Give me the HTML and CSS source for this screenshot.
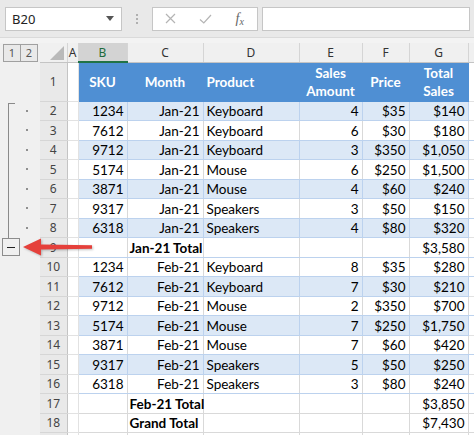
FILE: index.html
```html
<!DOCTYPE html>
<html lang="en">
<head>
  <meta charset="UTF-8">
  <title>Subtotals</title>
  <link rel="stylesheet" href="styles.css">
</head>
<body>

  <!-- Name box + formula bar -->
  <div class="formula-bar">
    <div class="name-box">
      <span>B20</span>
      <svg width="8" height="5" viewBox="0 0 8 5"><path d="M0 0h8L4 5z" fill="#555"/></svg>
    </div>
    <div class="grip"><i></i><i></i><i></i></div>
    <div class="fx-buttons">
      <span><svg width="11" height="11" viewBox="0 0 11 11"><path d="M1 1l9 9M10 1l-9 9" stroke="#b4b4b4" stroke-width="1.2"/></svg></span>
      <span><svg width="13" height="10" viewBox="0 0 13 10"><path d="M1 5.5l3.8 3.5L12 1" fill="none" stroke="#b4b4b4" stroke-width="1.2"/></svg></span>
      <span class="fx"><i>f</i><small>x</small></span>
    </div>
    <div class="formula-input"></div>
  </div>

  <div class="sheet">
    <table class="grid">
      <colgroup>
        <col style="width:40px"><col style="width:27px"><col style="width:11px">
        <col style="width:49px"><col style="width:76px"><col style="width:96px">
        <col style="width:63px"><col style="width:47px"><col style="width:59px"><col style="width:20px">
      </colgroup>

      <tr class="col-heads">
        <td class="gutter"><span class="level">1</span><span class="level">2</span></td>
        <td class="corner"><svg width="14" height="14" viewBox="0 0 14 14"><path d="M14 0v14H0z" fill="#b9b9b9"/></svg></td>
        <td>A</td><td class="sel">B</td><td>C</td><td>D</td><td>E</td><td>F</td><td>G</td><td></td>
      </tr>

      <tr class="head">
        <td class="gutter"></td><td class="rh">1</td><td class="a"></td>
        <td class="c">SKU</td><td class="c">Month</td><td class="l">Product</td>
        <td class="c">Sales<br>Amount</td><td class="c">Price</td><td class="c">Total<br>Sales</td><td class="h"></td>
      </tr>

      <tr class="band"><td class="gutter grp first"><i class="dot"></i></td><td class="rh">2</td><td class="a"></td>
        <td>1234</td><td>Jan-21</td><td class="l">Keyboard</td><td>4</td><td>$35</td><td>$140</td><td class="h"></td></tr>
      <tr class="plain"><td class="gutter grp"><i class="dot"></i></td><td class="rh">3</td><td class="a"></td>
        <td>7612</td><td>Jan-21</td><td class="l">Keyboard</td><td>6</td><td>$30</td><td>$180</td><td class="h"></td></tr>
      <tr class="band"><td class="gutter grp"><i class="dot"></i></td><td class="rh">4</td><td class="a"></td>
        <td>9712</td><td>Jan-21</td><td class="l">Keyboard</td><td>3</td><td>$350</td><td>$1,050</td><td class="h"></td></tr>
      <tr class="plain"><td class="gutter grp"><i class="dot"></i></td><td class="rh">5</td><td class="a"></td>
        <td>5174</td><td>Jan-21</td><td class="l">Mouse</td><td>6</td><td>$250</td><td>$1,500</td><td class="h"></td></tr>
      <tr class="band"><td class="gutter grp"><i class="dot"></i></td><td class="rh">6</td><td class="a"></td>
        <td>3871</td><td>Jan-21</td><td class="l">Mouse</td><td>4</td><td>$60</td><td>$240</td><td class="h"></td></tr>
      <tr class="plain"><td class="gutter grp"><i class="dot"></i></td><td class="rh">7</td><td class="a"></td>
        <td>9317</td><td>Jan-21</td><td class="l">Speakers</td><td>3</td><td>$50</td><td>$150</td><td class="h"></td></tr>
      <tr class="band"><td class="gutter grp"><i class="dot"></i></td><td class="rh">8</td><td class="a"></td>
        <td>6318</td><td>Jan-21</td><td class="l">Speakers</td><td>4</td><td>$80</td><td>$320</td><td class="h"></td></tr>
      <tr class="plain"><td class="gutter"><span class="toggle"><i></i></span></td><td class="rh">9</td><td class="a"></td>
        <td></td><td class="l b">Jan-21 Total</td><td></td><td></td><td></td><td>$3,580</td><td class="h"></td></tr>

      <tr class="plain"><td class="gutter"></td><td class="rh">10</td><td class="a"></td>
        <td>1234</td><td>Feb-21</td><td class="l">Keyboard</td><td>8</td><td>$35</td><td>$280</td><td class="h"></td></tr>
      <tr class="band"><td class="gutter"></td><td class="rh">11</td><td class="a"></td>
        <td>7612</td><td>Feb-21</td><td class="l">Keyboard</td><td>7</td><td>$30</td><td>$210</td><td class="h"></td></tr>
      <tr class="plain"><td class="gutter"></td><td class="rh">12</td><td class="a"></td>
        <td>9712</td><td>Feb-21</td><td class="l">Mouse</td><td>2</td><td>$350</td><td>$700</td><td class="h"></td></tr>
      <tr class="band"><td class="gutter"></td><td class="rh">13</td><td class="a"></td>
        <td>5174</td><td>Feb-21</td><td class="l">Mouse</td><td>7</td><td>$250</td><td>$1,750</td><td class="h"></td></tr>
      <tr class="plain"><td class="gutter"></td><td class="rh">14</td><td class="a"></td>
        <td>3871</td><td>Feb-21</td><td class="l">Mouse</td><td>7</td><td>$60</td><td>$420</td><td class="h"></td></tr>
      <tr class="band"><td class="gutter"></td><td class="rh">15</td><td class="a"></td>
        <td>9317</td><td>Feb-21</td><td class="l">Speakers</td><td>5</td><td>$50</td><td>$250</td><td class="h"></td></tr>
      <tr class="plain"><td class="gutter"></td><td class="rh">16</td><td class="a"></td>
        <td>6318</td><td>Feb-21</td><td class="l">Speakers</td><td>3</td><td>$80</td><td>$240</td><td class="h"></td></tr>
      <tr class="plain total"><td class="gutter"></td><td class="rh">17</td><td class="a"></td>
        <td></td><td class="l b">Feb-21 Total</td><td></td><td></td><td></td><td>$3,850</td><td class="h"></td></tr>
      <tr class="plain total"><td class="gutter"></td><td class="rh">18</td><td class="a"></td>
        <td></td><td class="l b">Grand Total</td><td></td><td></td><td></td><td>$7,430</td><td class="h"></td></tr>
      <tr class="plain total"><td class="gutter"></td><td class="rh"></td><td class="a"></td>
        <td></td><td></td><td></td><td></td><td></td><td></td><td class="h"></td></tr>
    </table>

    <!-- callout arrow pointing at the collapse button -->
    <svg class="arrow" width="76" height="24" viewBox="0 0 76 24">
      <path d="M3 12L21 3.5V9.5L72 10.2V13.8L21 14.5V20.5Z" fill="#e5403b"/>
    </svg>
  </div>

</body>
</html>
```

FILE: styles.css
```css
body {
  margin: 0;
  width: 474px;
  height: 435px;
  overflow: hidden;
  background: #f3f3f3;
  font-family: 'Lato', sans-serif;
}

/* Formula Bar */
.formula-bar {
  display: flex;
  align-items: center;
  height: 37px;
  padding-left: 5px;
  background: #e9e9e9;
  border-bottom: 1px solid #dadada;
  margin-bottom: 5px;
}

.name-box {
  width: 117px;
  height: 24px;
  box-sizing: border-box;
  border: 1px solid #c6c6c6;
  background: #fff;
  display: flex;
  align-items: center;
  justify-content: space-between;
  padding: 0 7px 0 6px;
  font: 13px 'Noto Sans', sans-serif;
  color: #222;
}

.grip {
  width: 30px;
  display: flex;
  flex-direction: column;
  align-items: center;
  gap: 2px;
}

.grip i {
  width: 2px;
  height: 2px;
  background: #b0b0b0;
}

.fx-buttons {
  width: 106px;
  height: 24px;
  box-sizing: border-box;
  border: 1px solid #c6c6c6;
  background: #fff;
  display: flex;
}

.fx-buttons span {
  width: 35px;
  display: flex;
  align-items: center;
  justify-content: center;
}

.fx {
  font-family: 'Liberation Serif', serif;
  color: #666;
  font-size: 14px;
}

.fx small {
  font-style: italic;
  font-size: 10px;
  margin-top: 5px;
}

.formula-input {
  flex: 1;
  height: 24px;
  box-sizing: border-box;
  margin: 0 4px;
  border: 1px solid #c6c6c6;
  background: #fff;
}

/* Sheet */
.sheet {
  position: relative;
  background: #fff;
}

.grid {
  border-collapse: collapse;
  table-layout: fixed;
  width: 468px;
}

.grid td {
  padding: 1px 3px 0;
  height: 19.5px;
  box-sizing: border-box;
  border: 1px solid #d9d9d9;
  font-size: 13.5px;
  color: #000;
  text-align: right;
  white-space: nowrap;
  overflow: hidden;
}

.grid td.l { text-align: left; }
.grid td.c { text-align: center; }
.grid td.b { font-weight: bold; overflow: visible; padding-left: 2px; }

/* column letters */
.col-heads td {
  height: 19px;
  background: #f0f0f0;
  border: none;
  border-right: 1px solid #d5d5d5;
  border-bottom: 1px solid #c4c4c4;
  text-align: center;
  font: 12px 'Noto Sans', sans-serif;
  color: #333;
  padding: 0;
}

.col-heads td.sel {
  background: #d3d3d3;
  color: #1e6b3c;
  border-bottom: 2px solid #217346;
}

.col-heads td.corner {
  text-align: right;
  vertical-align: bottom;
  padding: 0 3px 2px 0;
}

.col-heads td.corner svg { display: block; margin-left: auto; }

/* outline gutter */
.grid td.gutter {
  background: #f0f0f0;
  border: none;
  text-align: left;
  padding: 0;
}

.col-heads td.gutter {
  border-right: none;
  border-bottom: none;
  padding-left: 3px;
}

.level {
  display: inline-block;
  width: 16px;
  height: 16px;
  line-height: 16px;
  border: 1px solid #a0a0a0;
  background: #e9e9e9;
  font-size: 11px;
  color: #555;
  text-align: center;
  vertical-align: middle;
}

.level + .level { border-left: none; }

.grid td.grp {
  background: linear-gradient(#8a8a8a, #8a8a8a) 8px 0 / 1px 100% no-repeat, #f0f0f0;
}

.grid td.grp.first {
  background:
    linear-gradient(#8a8a8a, #8a8a8a) 8px 2px / 1px 100% no-repeat,
    linear-gradient(#8a8a8a, #8a8a8a) 8px 2px / 7px 1px no-repeat,
    #f0f0f0;
}

.dot {
  display: block;
  width: 2px;
  height: 2px;
  margin-left: 26px;
  background: #8f8f8f;
}

.toggle {
  display: flex;
  align-items: center;
  justify-content: center;
  width: 16px;
  height: 16px;
  margin-left: 2px;
  border: 1px solid #8c8c8c;
  background: #f0f0f0;
}

.toggle i {
  width: 8px;
  height: 1.5px;
  background: #222;
}

/* row numbers */
.grid td.rh {
  background: #e9e9e9;
  border: none;
  border-right: 1px solid #c4c4c4;
  border-bottom: 1px solid #d6d6d6;
  text-align: center;
  font: 12px 'Noto Sans', sans-serif;
  color: #444;
  padding: 0;
}

.grid td.a { border-color: #e2e2e2; }
.grid td.h { border-left-color: #a9c4e8; }

/* table header */
.head td {
  height: 39px;
  background: #4f8fd3;
  color: #fff;
  font-weight: bold;
  border-color: #4f8fd3;
  line-height: 18px;
}

.head td.a, .head td.h {
  background: #fff;
  border-color: #e2e2e2;
}

.band td {
  background: #dce8f6;
  border-color: #bcd2ee;
}

.band td.a, .band td.h {
  background: #fff;
  border-color: #e2e2e2;
}

.plain td { border-bottom-color: #bcd2ee; }
.total td { border-bottom-color: #d9d9d9; }

/* callout */
.arrow {
  position: absolute;
  left: 20px;
  top: 192px;
  filter: drop-shadow(1px 1px 1px rgba(0, 0, 0, 0.25));
}
```
